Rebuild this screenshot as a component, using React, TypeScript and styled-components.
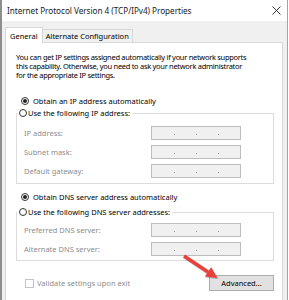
import React from "react";
import styled, { createGlobalStyle } from "styled-components";

const FONT = `"Noto Sans", "Segoe UI", "Liberation Sans", sans-serif`;
const FS = "7.5px";

const GlobalStyle = createGlobalStyle`
  html, body { margin: 0; padding: 0; background: #ffffff; }
  body { font-family: ${FONT}; -webkit-font-smoothing: antialiased; }
  * { box-sizing: border-box; }
`;

const Window = styled.div`
  position: relative;
  width: 288px;
  height: 300px;
  border-left: 2px solid #8e8e8e;
  border-right: 1px solid #a3a3a3;
  background: #f0f0f0;
  display: flex;
  flex-direction: column;
  overflow: hidden;
  font-family: ${FONT};
  font-size: ${FS};
  color: #000;
`;

const TitleBar = styled.div`
  height: 21px;
  flex: none;
  background: #ffffff;
  display: flex;
  align-items: center;
  justify-content: space-between;
  padding: 0 6px 0 5px;
  font-size: 8.2px;
  letter-spacing: -0.04px;
  color: #1a1a1a;
`;

const Body = styled.div`
  flex: 1;
  display: flex;
  flex-direction: column;
  padding: 6px 4px 0 3px;
`;

const TabRow = styled.div`
  display: flex;
  align-items: flex-end;
  height: 16px;
  margin-bottom: -1px;
  position: relative;
  z-index: 1;
`;

const Tab = styled.div<{ $active?: boolean }>`
  height: ${(p) => (p.$active ? "16px" : "13px")};
  margin-bottom: ${(p) => (p.$active ? "0" : "1px")};
  margin-left: ${(p) => (p.$active ? "0" : "-1px")};
  border: 1px solid #d9d9d9;
  border-bottom: none;
  background: ${(p) => (p.$active ? "#ffffff" : "#f0f0f0")};
  padding: 0 ${(p) => (p.$active ? "4px" : "3px")};
  display: flex;
  align-items: center;
  white-space: nowrap;
`;

const Panel = styled.div`
  flex: 1;
  background: #ffffff;
  border: 1px solid #d9d9d9;
  border-bottom: none;
  padding: 10px 8px 0 10px;
  display: flex;
  flex-direction: column;
`;

const Intro = styled.p`
  margin: 0;
  line-height: 9px;
  letter-spacing: -0.3px;
  white-space: nowrap;
`;

const RadioRow = styled.div<{ $legend?: boolean; $mt?: number }>`
  display: flex;
  align-items: center;
  height: 12px;
  gap: ${(p) => (p.$legend ? "1px" : "4px")};
  margin-left: ${(p) => (p.$legend ? "0" : "5px")};
  margin-top: ${(p) => p.$mt ?? 0}px;
  white-space: nowrap;
`;

const RadioCircle = styled.span<{ $checked?: boolean }>`
  width: 8px;
  height: 8px;
  border-radius: 50%;
  border: 1px solid #333333;
  background: #ffffff;
  display: flex;
  align-items: center;
  justify-content: center;
  flex: none;
  &::after {
    content: "";
    width: 4px;
    height: 4px;
    border-radius: 50%;
    background: ${(p) => (p.$checked ? "#222222" : "transparent")};
  }
`;

const Group = styled.fieldset<{ $mt?: number }>`
  margin: ${(p) => p.$mt ?? 0}px 0 0 0;
  padding: 0;
  border: 1px solid #dcdcdc;
  min-width: 0;
`;

const Legend = styled.legend`
  padding: 0 2px 0 2px;
  margin: 0;
  height: 12px;
`;

const FieldGrid = styled.div<{ $pt: number; $pb: number }>`
  display: grid;
  grid-template-columns: 127px 90px;
  row-gap: 5px;
  align-items: center;
  padding: ${(p) => p.$pt}px 0 ${(p) => p.$pb}px 7px;
`;

const FieldLabel = styled.span`
  color: #8d8d8d;
  white-space: nowrap;
`;

const IpBox = styled.div`
  height: 14px;
  border: 1px solid #bdbdbd;
  background: #f0f0f0;
  display: grid;
  grid-template-columns: repeat(4, 1fr);
  align-items: end;
  padding-bottom: 4px;
`;

const Dot = styled.span`
  justify-self: end;
  width: 1px;
  height: 1px;
  background: #9a9a9a;
  margin-right: -1px;
`;

const Footer = styled.div`
  display: flex;
  align-items: center;
  justify-content: space-between;
  margin-top: 14px;
  padding-left: 9px;
`;

const CheckRow = styled.div`
  display: flex;
  align-items: center;
  gap: 3px;
  color: #8d8d8d;
  white-space: nowrap;
`;

const CheckBox = styled.span`
  width: 9px;
  height: 9px;
  border: 1px solid #c4c4c4;
  background: #ffffff;
`;

const Button = styled.div`
  width: 65px;
  height: 16px;
  border: 1px solid #adadad;
  background: #e1e1e1;
  display: flex;
  align-items: center;
  justify-content: center;
  white-space: nowrap;
`;

const Overlay = styled.svg`
  position: absolute;
  left: -2px;
  top: 0;
  pointer-events: none;
`;

const IpField = () => (
  <IpBox>
    <Dot />
    <Dot />
    <Dot />
    <span />
  </IpBox>
);

export default function App() {
  return (
    <>
      <GlobalStyle />
      <Window>
        <TitleBar>
          <span>Internet Protocol Version 4 (TCP/IPv4) Properties</span>
          <svg width="9" height="9" viewBox="0 0 9 9">
            <path d="M0.5 0.5 L8.5 8.5 M8.5 0.5 L0.5 8.5" stroke="#222" strokeWidth="0.9" />
          </svg>
        </TitleBar>
        <Body>
          <TabRow>
            <Tab $active>General</Tab>
            <Tab>Alternate Configuration</Tab>
          </TabRow>
          <Panel>
            <Intro>
              You can get IP settings assigned automatically if your network supports
              <br />
              this capability. Otherwise, you need to ask your network administrator
              <br />
              for the appropriate IP settings.
            </Intro>
            <RadioRow $mt={15}>
              <RadioCircle $checked />
              <span>Obtain an IP address automatically</span>
            </RadioRow>
            <Group>
              <Legend>
                <RadioRow $legend>
                  <RadioCircle />
                  <span>Use the following IP address:</span>
                </RadioRow>
              </Legend>
              <FieldGrid $pt={7} $pb={5}>
                <FieldLabel>IP address:</FieldLabel>
                <IpField />
                <FieldLabel>Subnet mask:</FieldLabel>
                <IpField />
                <FieldLabel>Default gateway:</FieldLabel>
                <IpField />
              </FieldGrid>
            </Group>
            <RadioRow $mt={7}>
              <RadioCircle $checked />
              <span>Obtain DNS server address automatically</span>
            </RadioRow>
            <Group $mt={3}>
              <Legend>
                <RadioRow $legend>
                  <RadioCircle />
                  <span>Use the following DNS server addresses:</span>
                </RadioRow>
              </Legend>
              <FieldGrid $pt={5} $pb={4}>
                <FieldLabel>Preferred DNS server:</FieldLabel>
                <IpField />
                <FieldLabel>Alternate DNS server:</FieldLabel>
                <IpField />
              </FieldGrid>
            </Group>
            <Footer>
              <CheckRow>
                <CheckBox />
                <span>Validate settings upon exit</span>
              </CheckRow>
              <Button>Advanced...</Button>
            </Footer>
          </Panel>
        </Body>
        <Overlay width="289" height="300" viewBox="0 0 289 300">
          <defs>
            <filter id="sh" x="-20%" y="-20%" width="140%" height="140%">
              <feDropShadow dx="0.5" dy="0.8" stdDeviation="0.6" floodColor="#000" floodOpacity="0.35" />
            </filter>
          </defs>
          <g filter="url(#sh)">
            <line x1="184" y1="256" x2="208" y2="272" stroke="#e8403a" strokeWidth="3.4" />
            <polygon points="217.5,278 204.9,276.6 211.1,267.3" fill="#e8403a" />
          </g>
        </Overlay>
      </Window>
    </>
  );
}
